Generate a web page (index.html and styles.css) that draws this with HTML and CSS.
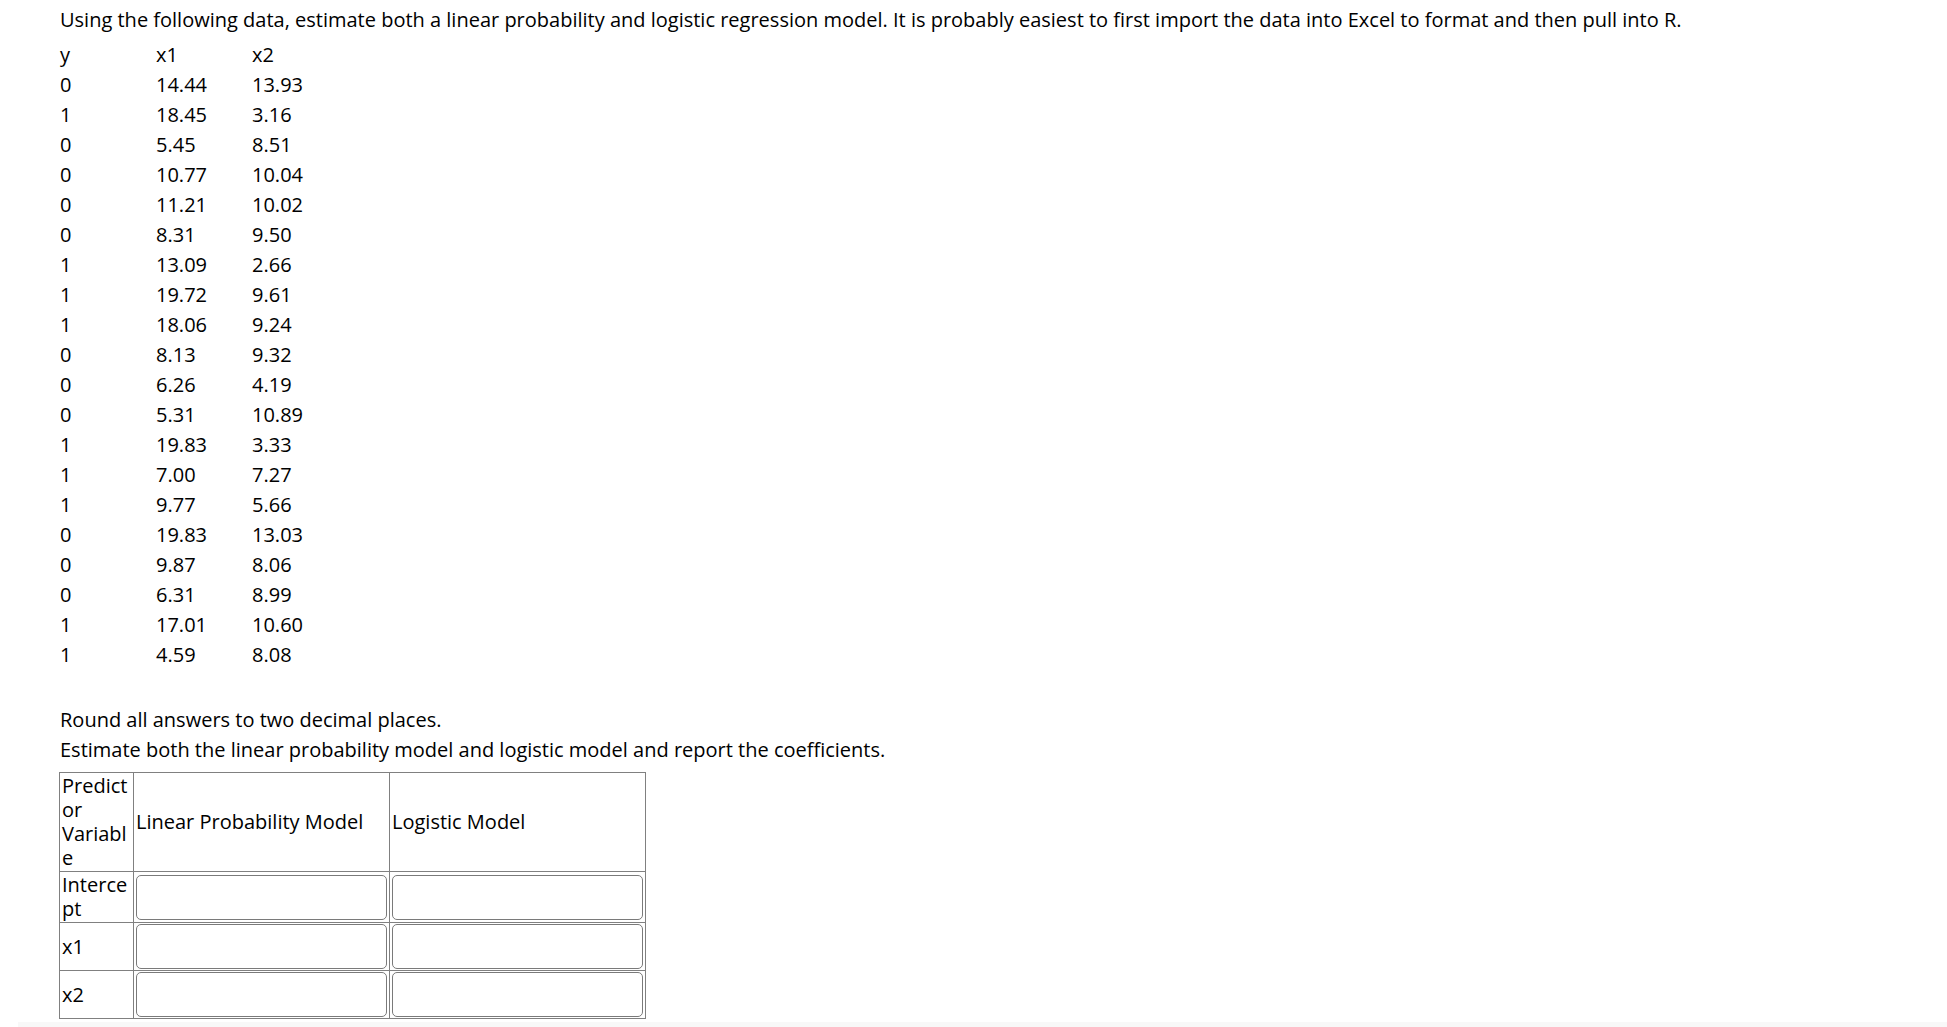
FILE: index.html
```html
<!DOCTYPE html>
<html>
<head>
<meta charset="utf-8">
<link rel="stylesheet" href="styles.css">
</head>
<body>
<div class="page">
  <p class="intro">Using the following data, estimate both a linear probability and logistic regression model. It is probably easiest to first import the data into Excel to format and then pull into R.</p>
  <div class="data">
    <span>y</span><span>x1</span><span>x2</span>
    <span>0</span><span>14.44</span><span>13.93</span>
    <span>1</span><span>18.45</span><span>3.16</span>
    <span>0</span><span>5.45</span><span>8.51</span>
    <span>0</span><span>10.77</span><span>10.04</span>
    <span>0</span><span>11.21</span><span>10.02</span>
    <span>0</span><span>8.31</span><span>9.50</span>
    <span>1</span><span>13.09</span><span>2.66</span>
    <span>1</span><span>19.72</span><span>9.61</span>
    <span>1</span><span>18.06</span><span>9.24</span>
    <span>0</span><span>8.13</span><span>9.32</span>
    <span>0</span><span>6.26</span><span>4.19</span>
    <span>0</span><span>5.31</span><span>10.89</span>
    <span>1</span><span>19.83</span><span>3.33</span>
    <span>1</span><span>7.00</span><span>7.27</span>
    <span>1</span><span>9.77</span><span>5.66</span>
    <span>0</span><span>19.83</span><span>13.03</span>
    <span>0</span><span>9.87</span><span>8.06</span>
    <span>0</span><span>6.31</span><span>8.99</span>
    <span>1</span><span>17.01</span><span>10.60</span>
    <span>1</span><span>4.59</span><span>8.08</span>
  </div>
  <p class="note first">Round all answers to two decimal places.</p>
  <p class="note">Estimate both the linear probability model and logistic model and report the coefficients.</p>
  <table class="answers">
    <colgroup><col class="c1"><col class="c2"><col class="c3"></colgroup>
    <tr class="head"><td>Predictor Variable</td><td>Linear Probability Model</td><td>Logistic Model</td></tr>
    <tr><td>Intercept</td><td><input type="text"></td><td><input type="text"></td></tr>
    <tr><td>x1</td><td><input type="text"></td><td><input type="text"></td></tr>
    <tr><td>x2</td><td><input type="text"></td><td><input type="text"></td></tr>
  </table>
</div>
<div class="bottom"></div>
</body>
</html>
```
FILE: styles.css
```css
html, body {
  margin: 0;
  padding: 0;
  background: #ffffff;
}
body {
  font-family: "Open Sans", "Noto Sans", sans-serif;
  font-size: 20px;
  color: #000;
}
.page {
  padding: 5px 0 0 60px;
}
.intro {
  margin: 0;
  line-height: 30px;
}
.data {
  margin-top: 5px;
  display: grid;
  grid-template-columns: 96px 96px 96px;
  grid-auto-rows: 30px;
  line-height: 30px;
}
.note {
  margin: 0;
  line-height: 30px;
}
.note.first {
  margin-top: 35px;
}
.answers {
  margin: 7px 0 0 -1px;
  border-collapse: collapse;
  table-layout: fixed;
  width: 586px;
  line-height: 24px;
}
.answers col.c1 { width: 74px; }
.answers col.c2 { width: 256px; }
.answers col.c3 { width: 256px; }
.answers td {
  border: 1px solid #808080;
  padding: 1px 2px;
  vertical-align: middle;
  overflow-wrap: anywhere;
}
.answers input {
  display: block;
  box-sizing: border-box;
  width: 100%;
  height: 45px;
  margin: 0;
  border: 1px solid #7a7a7a;
  border-radius: 5px;
  background: #fff;
  font: inherit;
}
.bottom {
  margin: 3px 0 0 18px;
  height: 10px;
  background: #f8f8f8;
}
```
